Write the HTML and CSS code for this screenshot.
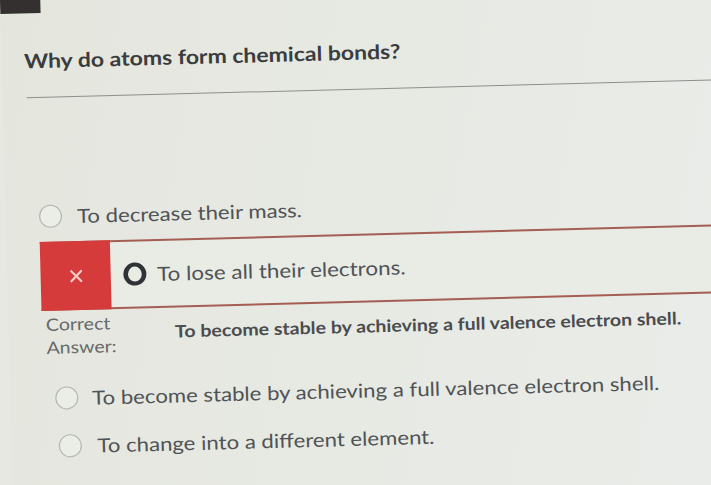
FILE: index.html
```
<!DOCTYPE html>
<html lang="en">
<head>
<meta charset="utf-8">
<title>Why do atoms form chemical bonds?</title>
<link rel="stylesheet" href="styles.css">
</head>
<body>
<div class="sheet">
  <div class="topbar"><div class="topbar-block"></div></div>
  <h1 class="question">Why do atoms form chemical bonds?</h1>
  <div class="rule"></div>

  <div class="option option-1">
    <span class="radio"></span>
    <span class="option-text">To decrease their mass.</span>
  </div>

  <div class="chosen">
    <div class="chosen-mark">
      <svg class="x-icon" viewBox="0 0 14 14" width="12" height="14" preserveAspectRatio="none">
        <path d="M2 2 L12 12 M12 2 L2 12" stroke="#f6cfcb" stroke-width="2.2" stroke-linecap="round" fill="none"/>
      </svg>
    </div>
    <span class="radio radio-selected"></span>
    <span class="option-text option-text-chosen">To lose all their electrons.</span>
  </div>

  <div class="correct">
    <div class="correct-label">Correct<br>Answer:</div>
    <div class="correct-text">To become stable by achieving a full valence electron shell.</div>
  </div>

  <div class="option option-3">
    <span class="radio"></span>
    <span class="option-text">To become stable by achieving a full valence electron shell.</span>
  </div>

  <div class="option option-4">
    <span class="radio"></span>
    <span class="option-text">To change into a different element.</span>
  </div>
</div>
</body>
</html>
```
FILE: styles.css
```
html, body {
  margin: 0;
  padding: 0;
  background: #e6e8e1;
  overflow: hidden;
  height: 485px;
}

.sheet {
  width: 700px;
  height: 520px;
  transform: rotate(-1.5deg) scaleX(1.15);
  transform-origin: 0 0;
  font-family: Lato, "Open Sans", sans-serif;
  display: flex;
  flex-direction: column;
  background: linear-gradient(100deg, #e4e6de 0%, #e7e9e3 45%, #eaedea 100%);
}

.topbar {
  height: 14px;
  display: flex;
}

.topbar-block {
  width: 35px;
  background: #34302f;
}

.question {
  margin: 35px 0 0 19.5px;
  font-size: 20px;
  line-height: 24px;
  font-weight: 700;
  color: #3b3c3d;
}

.rule {
  margin: 25px 0 0 20.5px;
  border-top: 1.5px solid #8d8f8c;
}

.option {
  height: 30px;
  display: flex;
  align-items: center;
}

.option-text {
  font-size: 19.3px;
  color: #505355;
}

.option-text-chosen {
  font-size: 19.5px;
}

.radio {
  box-sizing: border-box;
  width: 20px;
  height: 23px;
  border-radius: 50%;
  border: 1.5px solid #b4b6b2;
  background: #ebede7;
  flex: none;
}

.option-1 {
  margin-top: 103px;
  padding-left: 28.5px;
}
.option-1 .radio { margin-right: 13.5px; }

.chosen {
  margin: 11px 0 0 29.3px;
  height: 65px;
  display: flex;
  align-items: center;
  border-top: 2px solid #a45e55;
  border-bottom: 2px solid #a45e55;
  background: #e9ebe5;
}

.chosen-mark {
  align-self: stretch;
  width: 61px;
  margin: -2px 0;
  background: #d53b3b;
  display: flex;
  align-items: center;
  justify-content: center;
}

.radio-selected {
  width: 20px;
  height: 23px;
  border-width: 4.5px 4px;
  border-color: #2f3236;
  background: #e9ebe5;
  margin: 0 9px 0 11px;
}

.correct {
  margin: 3px 0 0 32.5px;
  height: 45px;
  display: flex;
  align-items: center;
}

.correct-label {
  width: 112px;
  flex: none;
  font-size: 17px;
  line-height: 22.5px;
  color: #676a6b;
}

.correct-text {
  font-size: 17px;
  font-weight: 700;
  color: #4a4c4e;
  margin-bottom: 4px;
}

.option-3 {
  margin-top: 24px;
  padding-left: 39px;
}
.option-3 .radio { margin-right: 12px; }

.option-4 {
  margin-top: 18px;
  padding-left: 40.5px;
}
.option-4 .radio { margin-right: 14px; }
```
